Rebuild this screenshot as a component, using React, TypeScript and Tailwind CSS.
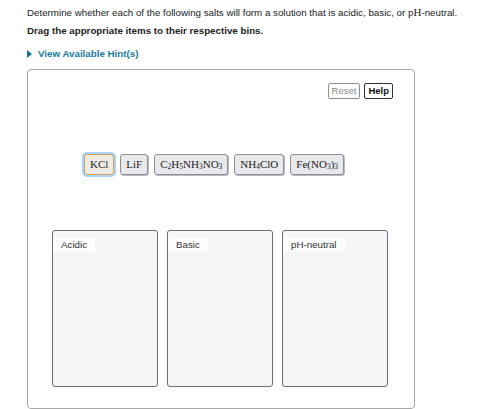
import React from "react";

const items: { key: string; label: React.ReactNode }[] = [
  { key: "kcl", label: <>KCl</> },
  { key: "lif", label: <>LiF</> },
  {
    key: "ethyl",
    label: (
      <>
        C<sub>2</sub>H<sub>5</sub>NH<sub>3</sub>NO<sub>3</sub>
      </>
    ),
  },
  {
    key: "nh4clo",
    label: (
      <>
        NH<sub>4</sub>ClO
      </>
    ),
  },
  {
    key: "feno3",
    label: (
      <>
        Fe(NO<sub>3</sub>)<sub>3</sub>
      </>
    ),
  },
];

const bins = ["Acidic", "Basic", "pH-neutral"];

function Chip({ label, selected }: { label: React.ReactNode; selected?: boolean }) {
  return (
    <div
      className={`flex h-[21px] items-center rounded-[3px] px-[5px] text-[11px] leading-none text-[#222] [font-family:'Liberation_Serif',serif] [&_sub]:text-[7.5px] [&_sub]:leading-none [&_sub]:align-[-2px] ${
        selected
          ? "border border-[#d6a25a] bg-[#efece6] shadow-[0_0_0_2px_#a9d4f5]"
          : "border border-[#8d8d96] bg-[#e9e9ec] shadow-[1px_1px_0_#b9b9c2]"
      }`}
    >
      {label}
    </div>
  );
}

export default function App() {
  return (
    <div className="min-h-[409px] bg-white pl-[27px] pt-[5px] text-[#222] [font-family:'Liberation_Sans',Arial,sans-serif]">
      <p className="whitespace-nowrap text-[9.75px] leading-[14px]">
        Determine whether each of the following salts will form a solution that is acidic, basic, or{" "}
        <span className="text-[11px] [font-family:'Liberation_Serif',serif]">pH</span>-neutral.
      </p>
      <p className="mt-[4px] text-[9.75px] font-bold leading-[14px]">
        Drag the appropriate items to their respective bins.
      </p>
      <div className="mt-[9px] flex items-center gap-[6px] text-[9.75px] font-bold leading-[14px] text-[#1b7aa0]">
        <span className="h-0 w-0 border-y-[4px] border-l-[5px] border-y-transparent border-l-[#1b6e94]" />
        <span>View Available Hint(s)</span>
      </div>

      <div className="mt-[8px] h-[340px] w-[388px] rounded-[4px] border border-[#a8a8a8] bg-white">
        <div className="flex justify-end gap-[4px] pr-[21px] pt-[13px]">
          <button className="h-[16px] rounded-[2px] border border-[#8a8f98] bg-white px-[3px] text-[9.5px] leading-none text-[#888]">
            Reset
          </button>
          <button className="h-[16px] rounded-[2px] border border-[#333] bg-white px-[3px] text-[9.5px] font-bold leading-none text-[#111]">
            Help
          </button>
        </div>

        <div className="mt-[55px] flex gap-[6px] pl-[56px]">
          {items.map((it, i) => (
            <Chip key={it.key} label={it.label} selected={i === 0} />
          ))}
        </div>

        <div className="mt-[55px] flex gap-[9px] pl-[24px]">
          {bins.map((b) => (
            <div
              key={b}
              className="h-[157px] w-[106px] rounded-[3px] border border-[#6e6a78] bg-[#f6f6f6]"
            >
              <div className="inline-block bg-[#fdfdfd] pl-[8px] pr-[8px] text-[9.75px] leading-[14px] text-[#333]">
                {b}
              </div>
            </div>
          ))}
        </div>
      </div>
    </div>
  );
}
